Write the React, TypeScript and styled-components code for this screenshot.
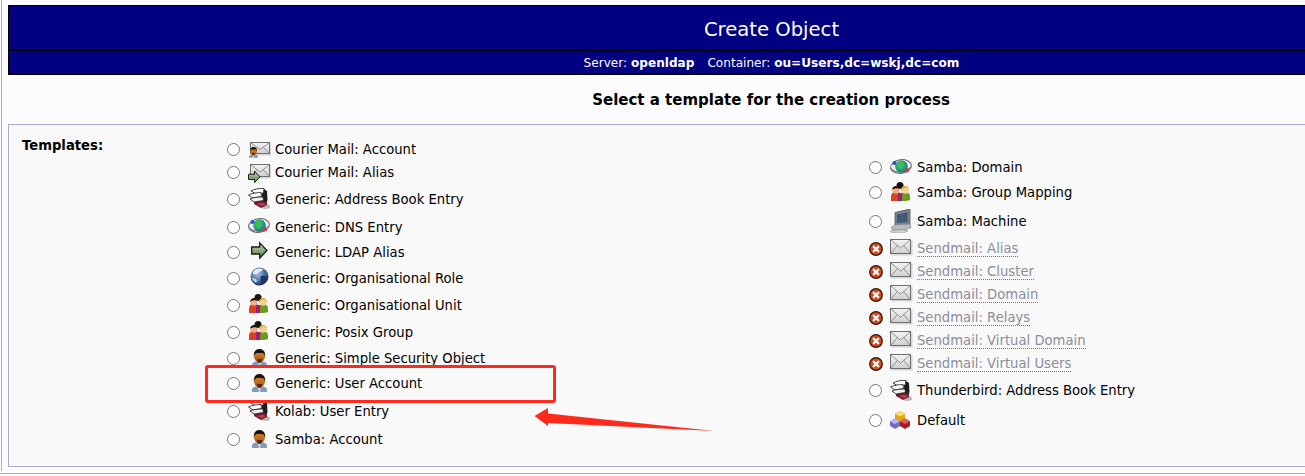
import React from "react";
import styled, {createGlobalStyle} from "styled-components";

const GlobalStyle = createGlobalStyle`
  html, body {
    margin: 0;
    padding: 0;
    overflow: hidden;
    background: #fff;
    font-family: "DejaVu Sans", Verdana, sans-serif;
  }
`

// the original page was wider than the crop, so centred titles sit right of the middle
const CENTER_OFFSET = 229

const Page = styled.div`
  position: relative;
  height: 476px;
  box-sizing: border-box;
  padding-left: 1px;
  overflow: hidden;
`

const Body = styled.div`
  height: 471px;
  box-sizing: border-box;
  padding: 5px 0 0 6px;
  background: #fcfcff;
  border-left: 1px solid #aaaacc;
`

const FooterRule = styled.div`
  height: 1px;
  margin: 2px 0 0 -1px;
  background: #aaaacc;
`

const TitleBar = styled.h3`
  margin: 0;
  height: 46px;
  box-sizing: border-box;
  display: flex;
  align-items: center;
  justify-content: center;
  padding: 2px 0 0 ${CENTER_OFFSET}px;
  background: #000080;
  border: 1px solid #000;
  border-right: 0;
  color: #fff;
  font-size: 19.6px;
  font-weight: 400;
`

const SubBar = styled.div`
  height: 24px;
  box-sizing: border-box;
  display: flex;
  align-items: center;
  justify-content: center;
  gap: 13px;
  padding-left: ${CENTER_OFFSET}px;
  background: #000080;
  border: 1px solid #000;
  border-width: 0 0 1px 1px;
  color: #fff;
  font-size: 12.1px;
`

const Heading = styled.div`
  height: 49px;
  display: flex;
  align-items: center;
  justify-content: center;
  padding: 1px 0 0 ${CENTER_OFFSET}px;
  box-sizing: border-box;
  font-size: 15px;
  font-weight: 700;
  color: #000;
`

const Panel = styled.div`
  height: 343px;
  box-sizing: border-box;
  display: grid;
  grid-template-columns: 218px 642px 1fr;
  align-items: center;
  background: #f9f9f9;
  border: 1px solid #aaaacc;
  border-right: 0;
`

const PanelLabel = styled.div`
  align-self: start;
  padding: 13px 0 0 13px;
  font-size: 13.2px;
  font-weight: 700;
  color: #000;
`

const Column = styled.div<{$bottom?: number}>`
  display: flex;
  flex-direction: column;
  padding-bottom: ${props => props.$bottom ?? 0}px;
`

const Row = styled.label<{$height: number}>`
  height: ${props => props.$height}px;
  display: grid;
  grid-template-columns: 20px 28px 1fr;
  align-items: center;
  font-size: 13.2px;
  color: #000;
`

const Radio = styled.input.attrs({type: "radio"})`
  margin: 0;
  width: 13px;
  height: 13px;
`

const IconSlot = styled.span`
  display: flex;
  align-items: center;
  height: 24px;
`

const DisabledText = styled.span`
  justify-self: start;
  color: #8b8e99;
  border-bottom: 1px dotted #777;
  line-height: 14px;
`

const Highlight = styled.div`
  position: absolute;
  left: 205px;
  top: 365px;
  width: 351px;
  height: 38px;
  box-sizing: border-box;
  border: 3px solid #ff2a1c;
  border-radius: 3px;
`

const ArrowMark = styled.svg`
  position: absolute;
  left: 530px;
  top: 405px;
`

const ErrorSvg = styled.svg`
  display: block;
`

const Defs = styled.svg`
  position: absolute;
  width: 0;
  height: 0;
`

type IconKind = "mailUser" | "mailAlias" | "book" | "dns" | "arrow" | "globe" | "group" | "user" | "machine" | "mail" | "cube"

const Gradients = () => (
  <Defs>
    <defs>
      <linearGradient id="mailFill" x1="0" y1="0" x2="0" y2="1">
        <stop offset="0" stopColor="#f4f4f4"/>
        <stop offset="1" stopColor="#cfcfcf"/>
      </linearGradient>
      <radialGradient id="globeFill" cx="0.4" cy="0.35" r="0.7">
        <stop offset="0" stopColor="#a9c3dd"/>
        <stop offset="0.55" stopColor="#4a75a8"/>
        <stop offset="1" stopColor="#14284e"/>
      </radialGradient>
      <linearGradient id="arrowFill" x1="0" y1="0" x2="0" y2="1">
        <stop offset="0" stopColor="#c6d8b8"/>
        <stop offset="1" stopColor="#4f7a45"/>
      </linearGradient>
      <linearGradient id="faceFill" x1="0" y1="0" x2="0" y2="1">
        <stop offset="0" stopColor="#e08a2a"/>
        <stop offset="1" stopColor="#a8561a"/>
      </linearGradient>
      <radialGradient id="dnsFill" cx="0.4" cy="0.4" r="0.6">
        <stop offset="0" stopColor="#4fd08a"/>
        <stop offset="1" stopColor="#0e7f86"/>
      </radialGradient>
    </defs>
  </Defs>
)

// icon coordinates are 24x24 with the text line through y=12
const Mail = ({x, y, w = 20, h = 12}: {x: number, y: number, w?: number, h?: number}) => (
  <g transform={`translate(${x} ${y})`}>
    <rect x="1.500" y="1.500" width={w} height={h} fill="#bdbdbd" opacity=".6"/>
    <rect x="0.500" y="0.500" width={w - 1} height={h - 1} fill="url(#mailFill)" stroke="#6d6f72"/>
    <path d={`M1 1L${w / 2} ${h * 0.62}L${w - 1} 1M1 ${h - 1}L${w * 0.36} ${h * 0.42}M${w - 1} ${h - 1}L${w * 0.64} ${h * 0.42}`} fill="none" stroke="#8f9194"/>
  </g>
)

const Person = ({x, y, s = 1}: {x: number, y: number, s?: number}) => (
  <g transform={`translate(${x} ${y}) scale(${s})`}>
    <path d="M0 18v-2.500C0 14 1.500 13.200 4 12.500h7c2.500.7 4 1.500 4 3V18z" fill="#7f9cbc"/>
    <path d="M6 13h3l-.6 5H6.600z" fill="#c7d2df"/>
    <ellipse cx="7.500" cy="6.800" rx="5.600" ry="6.600" fill="url(#faceFill)"/>
    <path d="M1.800 7.500C1.400 2.500 4 0 7.500 0s6.100 2.500 5.700 7.500C12.500 5 11.500 4 10 4H5C3.500 4 2.500 5 1.800 7.500z" fill="#17130f"/>
    <path d="M5 9.500c1.500 1 3.500 1 5 0l-.5 3.500-2 1-2-1z" fill="#4d260c"/>
  </g>
)

const ArrowGlyph = ({x, y, s = 1}: {x: number, y: number, s?: number}) => (
  <path
    transform={`translate(${x} ${y}) scale(${s})`}
    d="M.7 5h8V.8l7.300 7.700-7.300 7.700V12h-8z"
    fill="url(#arrowFill)"
    stroke="#15210f"
    strokeWidth="1.300"
  />
)

const Book = () => (
  <g>
    <ellipse cx="18.500" cy="19.500" rx="4.500" ry="2.500" fill="#8c8c8c" opacity=".6"/>
    <path d="M15 4l2-2 3 2 .5 9-1 3-4.500-1z" fill="#1e1c1e"/>
    <path d="M7 15l7-1.500 6 1.500v3l-6 3-7-4z" fill="#7b1a2c"/>
    <path d="M10 17l5-1 4 1-4 2z" fill="#b2485c"/>
    <path d="M4 4c3-2 9-3 13-2.500L16.500 6 9 7z" fill="#fafafa" stroke="#1a1a1a" strokeWidth=".8"/>
    <path d="M1.500 8c3-1.500 8-2.500 12.500-2.500l.5 4-8.500 1.500z" fill="#fff" stroke="#1a1a1a" strokeWidth=".8"/>
    <path d="M3 12c3-1.500 8-2 13-2l.5 3.500-9.500 1.500z" fill="#f0f0f0" stroke="#1a1a1a" strokeWidth=".8"/>
  </g>
)

const Dns = () => (
  <g>
    <ellipse cx="12" cy="10.500" rx="10.500" ry="6.800" fill="#f1f1f1" stroke="#6c6c6c" transform="rotate(-8 12 10.500)"/>
    <circle cx="12.500" cy="10.500" r="6.300" fill="url(#dnsFill)"/>
    <path d="M9 6.500c2.500-1.500 5-1 6 .5l-2.500 3-.8 3.500-2.700-2.500z" fill="#37c24a"/>
    <circle cx="5.500" cy="7" r="2.100" fill="#2a55d0"/>
    <circle cx="17.800" cy="14.200" r="2.300" fill="#d9333f"/>
    <path d="M2 12.500c4 5 15 5 20-2" fill="none" stroke="#666" strokeWidth="1"/>
  </g>
)

const Globe = () => (
  <g>
    <circle cx="12.500" cy="10.500" r="9" fill="url(#globeFill)"/>
    <path d="M8 3.500c3-1.500 6-1.500 8 0-1 2.500-3.500 1.500-5 3.500S6.500 8.500 5.500 7z" fill="#e4eaf1"/>
    <path d="M5 12c2 0 4 1 5.500 3l-2 1.500C7 15.500 6 14 5 12z" fill="#c7d6e6"/>
    <path d="M14 10c2.500-.5 5 0 6.500 1.500-.5 3-2.500 5.500-5.500 7-1.500-2.500-2-5.500-1-8.500z" fill="#1d3560"/>
  </g>
)

const Group = () => (
  <g>
    <circle cx="11" cy="4.500" r="3.500" fill="#16120e"/>
    <path d="M2 20v-4c0-3 1.500-5 4-5h4.500L10 20z" fill="#d9431f"/>
    <path d="M9 12h7l-1 8H9z" fill="#a01f78"/>
    <path d="M13 20V14c0-1.500 1.500-2.500 3.500-2.500S21 12.500 21 15v4c-2 1-5.500 1.200-8 1z" fill="#6e9a1e"/>
    <circle cx="7" cy="9" r="3.700" fill="#efae86"/>
    <path d="M3.200 8.800c-.5-4.500 7-5.500 7.500-.8-2-1.200-5.500-1-7.500.8z" fill="#19130f"/>
    <circle cx="16" cy="9" r="3.800" fill="#f3cf9a"/>
    <path d="M12.300 9.500C11.500 4 20 3.200 20 9c-.8-1.500-2-2.500-3-2.500-1.500.8-3.500 1-4.700 3z" fill="#d8b032"/>
  </g>
)

const Machine = () => (
  <g>
    <path d="M6 3.500L21 0v15.500L6 16z" fill="#7b828b" stroke="#555a61" strokeWidth=".8"/>
    <path d="M8 5.500l10.500-2.300V13L8 14z" fill="#3a5a78"/>
    <path d="M2 18.500l5-3 14-.5 1 3.500-7 2.500H4z" fill="#b8bcc1" stroke="#7b7f84" strokeWidth=".7"/>
    <path d="M1 22l12-1.500 6 1-4 2.500H3z" fill="#cfd2d6" stroke="#8e9195" strokeWidth=".6"/>
  </g>
)

const Cube = () => (
  <g>
    <path d="M11 2l5 2.800v5.500L11 13l-5-2.700V4.800z" fill="#e8a612"/>
    <path d="M11 2l5 2.800L11 7.500 6 4.800z" fill="#ffdf70"/>
    <path d="M6 9.500l5 2.800V17l-5 3-5-3v-4.700z" fill="#6d70c2"/>
    <path d="M6 9.500l5 2.800L6 15 1 12.300z" fill="#b5b7ee"/>
    <path d="M16 9.500l5 2.800V17l-5 3-5-3v-4.700z" fill="#a81a1e"/>
    <path d="M16 9.500l5 2.800-5 2.700-5-2.700z" fill="#dd5f58"/>
  </g>
)

const TemplateIcon: React.FC<{kind: IconKind}> = ({kind}) => (
  <svg width="24" height="24" viewBox="0 0 24 24">
    {kind === "mailUser" && <><Mail x={3} y={4}/><Person x={2} y={9} s={0.6}/></>}
    {kind === "mailAlias" && <><Mail x={3} y={3} h={13}/><ArrowGlyph x={1} y={9.500} s={0.75}/></>}
    {kind === "book" && <Book/>}
    {kind === "dns" && <Dns/>}
    {kind === "arrow" && <ArrowGlyph x={4} y={2}/>}
    {kind === "globe" && <Globe/>}
    {kind === "group" && <Group/>}
    {kind === "user" && <Person x={5} y={3}/>}
    {kind === "machine" && <Machine/>}
    {kind === "mail" && <Mail x={1} y={2} w={21} h={15}/>}
    {kind === "cube" && <Cube/>}
  </svg>
)

const ErrorIcon = () => (
  <ErrorSvg width="14" height="14" viewBox="0 0 14 14">
    <circle cx="7" cy="7" r="6.300" fill="#d4491e" stroke="#2e140c" strokeWidth="1.200"/>
    <path d="M4.700 4.700l4.600 4.600M9.300 4.700l-4.600 4.600" stroke="#fff" strokeWidth="2.200" strokeLinecap="round"/>
  </ErrorSvg>
)

type Template = {
  label: string,
  icon: IconKind,
  height: number,
  disabled?: boolean,
}

const LEFT_TEMPLATES: Template[] = [
  {label: "Courier Mail: Account", icon: "mailUser", height: 23},
  {label: "Courier Mail: Alias", icon: "mailAlias", height: 23},
  {label: "Generic: Address Book Entry", icon: "book", height: 31},
  {label: "Generic: DNS Entry", icon: "dns", height: 25},
  {label: "Generic: LDAP Alias", icon: "arrow", height: 25},
  {label: "Generic: Organisational Role", icon: "globe", height: 27},
  {label: "Generic: Organisational Unit", icon: "group", height: 27},
  {label: "Generic: Posix Group", icon: "group", height: 27},
  {label: "Generic: Simple Security Object", icon: "user", height: 25},
  {label: "Generic: User Account", icon: "user", height: 25},
  {label: "Kolab: User Entry", icon: "book", height: 31},
  {label: "Samba: Account", icon: "user", height: 25},
]

const RIGHT_TEMPLATES: Template[] = [
  {label: "Samba: Domain", icon: "dns", height: 25},
  {label: "Samba: Group Mapping", icon: "group", height: 25},
  {label: "Samba: Machine", icon: "machine", height: 32},
  {label: "Sendmail: Alias", icon: "mail", height: 23, disabled: true},
  {label: "Sendmail: Cluster", icon: "mail", height: 23, disabled: true},
  {label: "Sendmail: Domain", icon: "mail", height: 23, disabled: true},
  {label: "Sendmail: Relays", icon: "mail", height: 23, disabled: true},
  {label: "Sendmail: Virtual Domain", icon: "mail", height: 23, disabled: true},
  {label: "Sendmail: Virtual Users", icon: "mail", height: 23, disabled: true},
  {label: "Thunderbird: Address Book Entry", icon: "book", height: 31},
  {label: "Default", icon: "cube", height: 29},
]

const TemplateRow: React.FC<{template: Template}> = ({template}) => (
  <Row $height={template.height}>
    {template.disabled ? <ErrorIcon/> : <Radio name="template"/>}
    <IconSlot><TemplateIcon kind={template.icon}/></IconSlot>
    {template.disabled
      ? <DisabledText>{template.label}</DisabledText>
      : <span>{template.label}</span>}
  </Row>
)

const App: React.FC = () => (
  <>
    <GlobalStyle/>
    <Gradients/>
    <Page>
      <Body>
        <TitleBar>Create Object</TitleBar>
        <SubBar>
          <span>Server: <b>openldap</b></span>
          <span>Container: <b>ou=Users,dc=wskj,dc=com</b></span>
        </SubBar>
        <Heading>Select a template for the creation process</Heading>
        <Panel>
          <PanelLabel>Templates:</PanelLabel>
          <Column $bottom={2}>
            {LEFT_TEMPLATES.map(t => <TemplateRow key={t.label} template={t}/>)}
          </Column>
          <Column $bottom={1}>
            {RIGHT_TEMPLATES.map(t => <TemplateRow key={t.label} template={t}/>)}
          </Column>
        </Panel>
      </Body>
      <FooterRule/>
      <Highlight/>
      <ArrowMark width="190" height="30" viewBox="0 0 190 30">
        <path d="M4.500 11L18 3v5.500L184 26 18 18v3z" fill="#ff2a1c"/>
      </ArrowMark>
    </Page>
  </>
)

export default App;
